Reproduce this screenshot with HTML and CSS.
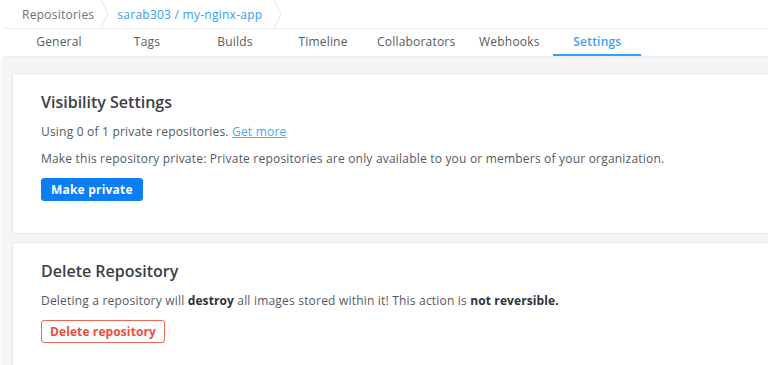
FILE: index.html
```html
<html>
<head>
<meta charset="UTF-8">
<title>sarab303 / my-nginx-app - Settings</title>
<link rel="stylesheet" href="styles.css">
</head>
<body>

  <div class="crumbs">
    <span class="crumb">Repositories</span>
    <svg class="chev" width="10" height="28" viewBox="0 0 10 28"><path d="M2 0 L9 14 L2 28" fill="none" stroke="#e3e5e8" stroke-width="1"/></svg>
    <a class="crumb link" href="#">sarab303 / my-nginx-app</a>
    <svg class="chev last" width="10" height="28" viewBox="0 0 10 28"><path d="M2 0 L9 14 L2 28" fill="none" stroke="#e3e5e8" stroke-width="1"/></svg>
  </div>

  <div class="tabs">
    <a class="tab" href="#">General</a>
    <a class="tab" href="#">Tags</a>
    <a class="tab" href="#">Builds</a>
    <a class="tab" href="#">Timeline</a>
    <a class="tab" href="#">Collaborators</a>
    <a class="tab" href="#">Webhooks</a>
    <a class="tab active" href="#">Settings</a>
  </div>

  <div class="page">

    <div class="card">
      <h3>Visibility Settings</h3>
      <p>Using 0 of 1 private repositories. <a class="more" href="#">Get more</a></p>
      <p>Make this repository private: Private repositories are only available to you or members of your organization.</p>
      <button class="btn primary">Make private</button>
    </div>

    <div class="card">
      <h3>Delete Repository</h3>
      <p>Deleting a repository will <b>destroy</b> all images stored within it! This action is <b>not reversible.</b></p>
      <button class="btn danger">Delete repository</button>
    </div>

  </div>

</body>
</html>
```
FILE: styles.css
```css
body
{
  margin : 0;
  font-family : "Open Sans", "Liberation Sans", sans-serif;
  font-size : 12px;
  letter-spacing : 0.2px;
  color : #535a62;
  background : #fff;
  overflow : hidden;
}

a
{
  text-decoration : none;
}

/* breadcrumb bar */
.crumbs
{
  display : flex;
  align-items : center;
  height : 28px;
  padding-left : 19px;
  margin-left : 3px;
  border-bottom : 1px solid #eceef0;
}
.crumbs .crumb
{
  color : #6b7178;
  letter-spacing : 0.25px;
}
.crumbs .crumb.link
{
  color : #3a9cf0;
}
.crumbs .chev
{
  margin : 0 8px 0 5px;
}
.crumbs .chev.last
{
  margin-left : 10px;
}

/* tabs */
.tabs
{
  display : flex;
  height : 27px;
  padding-left : 12px;
  margin-left : 3px;
  border-bottom : 1px solid #eceef0;
}
.tab
{
  min-width : 88px;
  padding : 0 10px;
  box-sizing : border-box;
  display : flex;
  align-items : center;
  justify-content : center;
  color : #555b61;
  border-bottom : 2px solid transparent;
}
.tab.active
{
  color : #3d9ff3;
  font-weight : 600;
  border-bottom-color : #3d9ff3;
}

/* content */
.page
{
  background : #f4f5f7;
  border-left : 3px solid #f9fafb;
  padding : 16px 0 40px 9px;
  overflow : hidden;
}
.card
{
  background : #fff;
  border : 1px solid #e6e8eb;
  margin : 0 -2px 8px 0;
  padding : 18px 28px 32px;
}
.card h3
{
  margin : 0 0 10px;
  font-size : 16px;
  line-height : 20px;
  letter-spacing : 0;
  font-weight : 600;
  color : #3a4047;
}
.card p
{
  margin : 0 0 7px;
  line-height : 20px;
}
.card p b
{
  color : #2e3338;
  letter-spacing : 0.1px;
}
.more
{
  color : #47a8f5;
  text-decoration : underline;
}
.btn
{
  margin-top : 2px;
  height : 23px;
  padding : 0 9px;
  font-family : inherit;
  font-size : 12px;
  letter-spacing : 0.2px;
  font-weight : 700;
  border-radius : 3px;
  cursor : pointer;
}
.btn.primary
{
  background : #0b7ef6;
  border : 1px solid #0b7ef6;
  color : #fff;
}
.btn.danger
{
  background : #fff;
  border : 1px solid #ea6657;
  color : #e8503f;
  padding : 0 8px;
  letter-spacing : 0.1px;
}
```
